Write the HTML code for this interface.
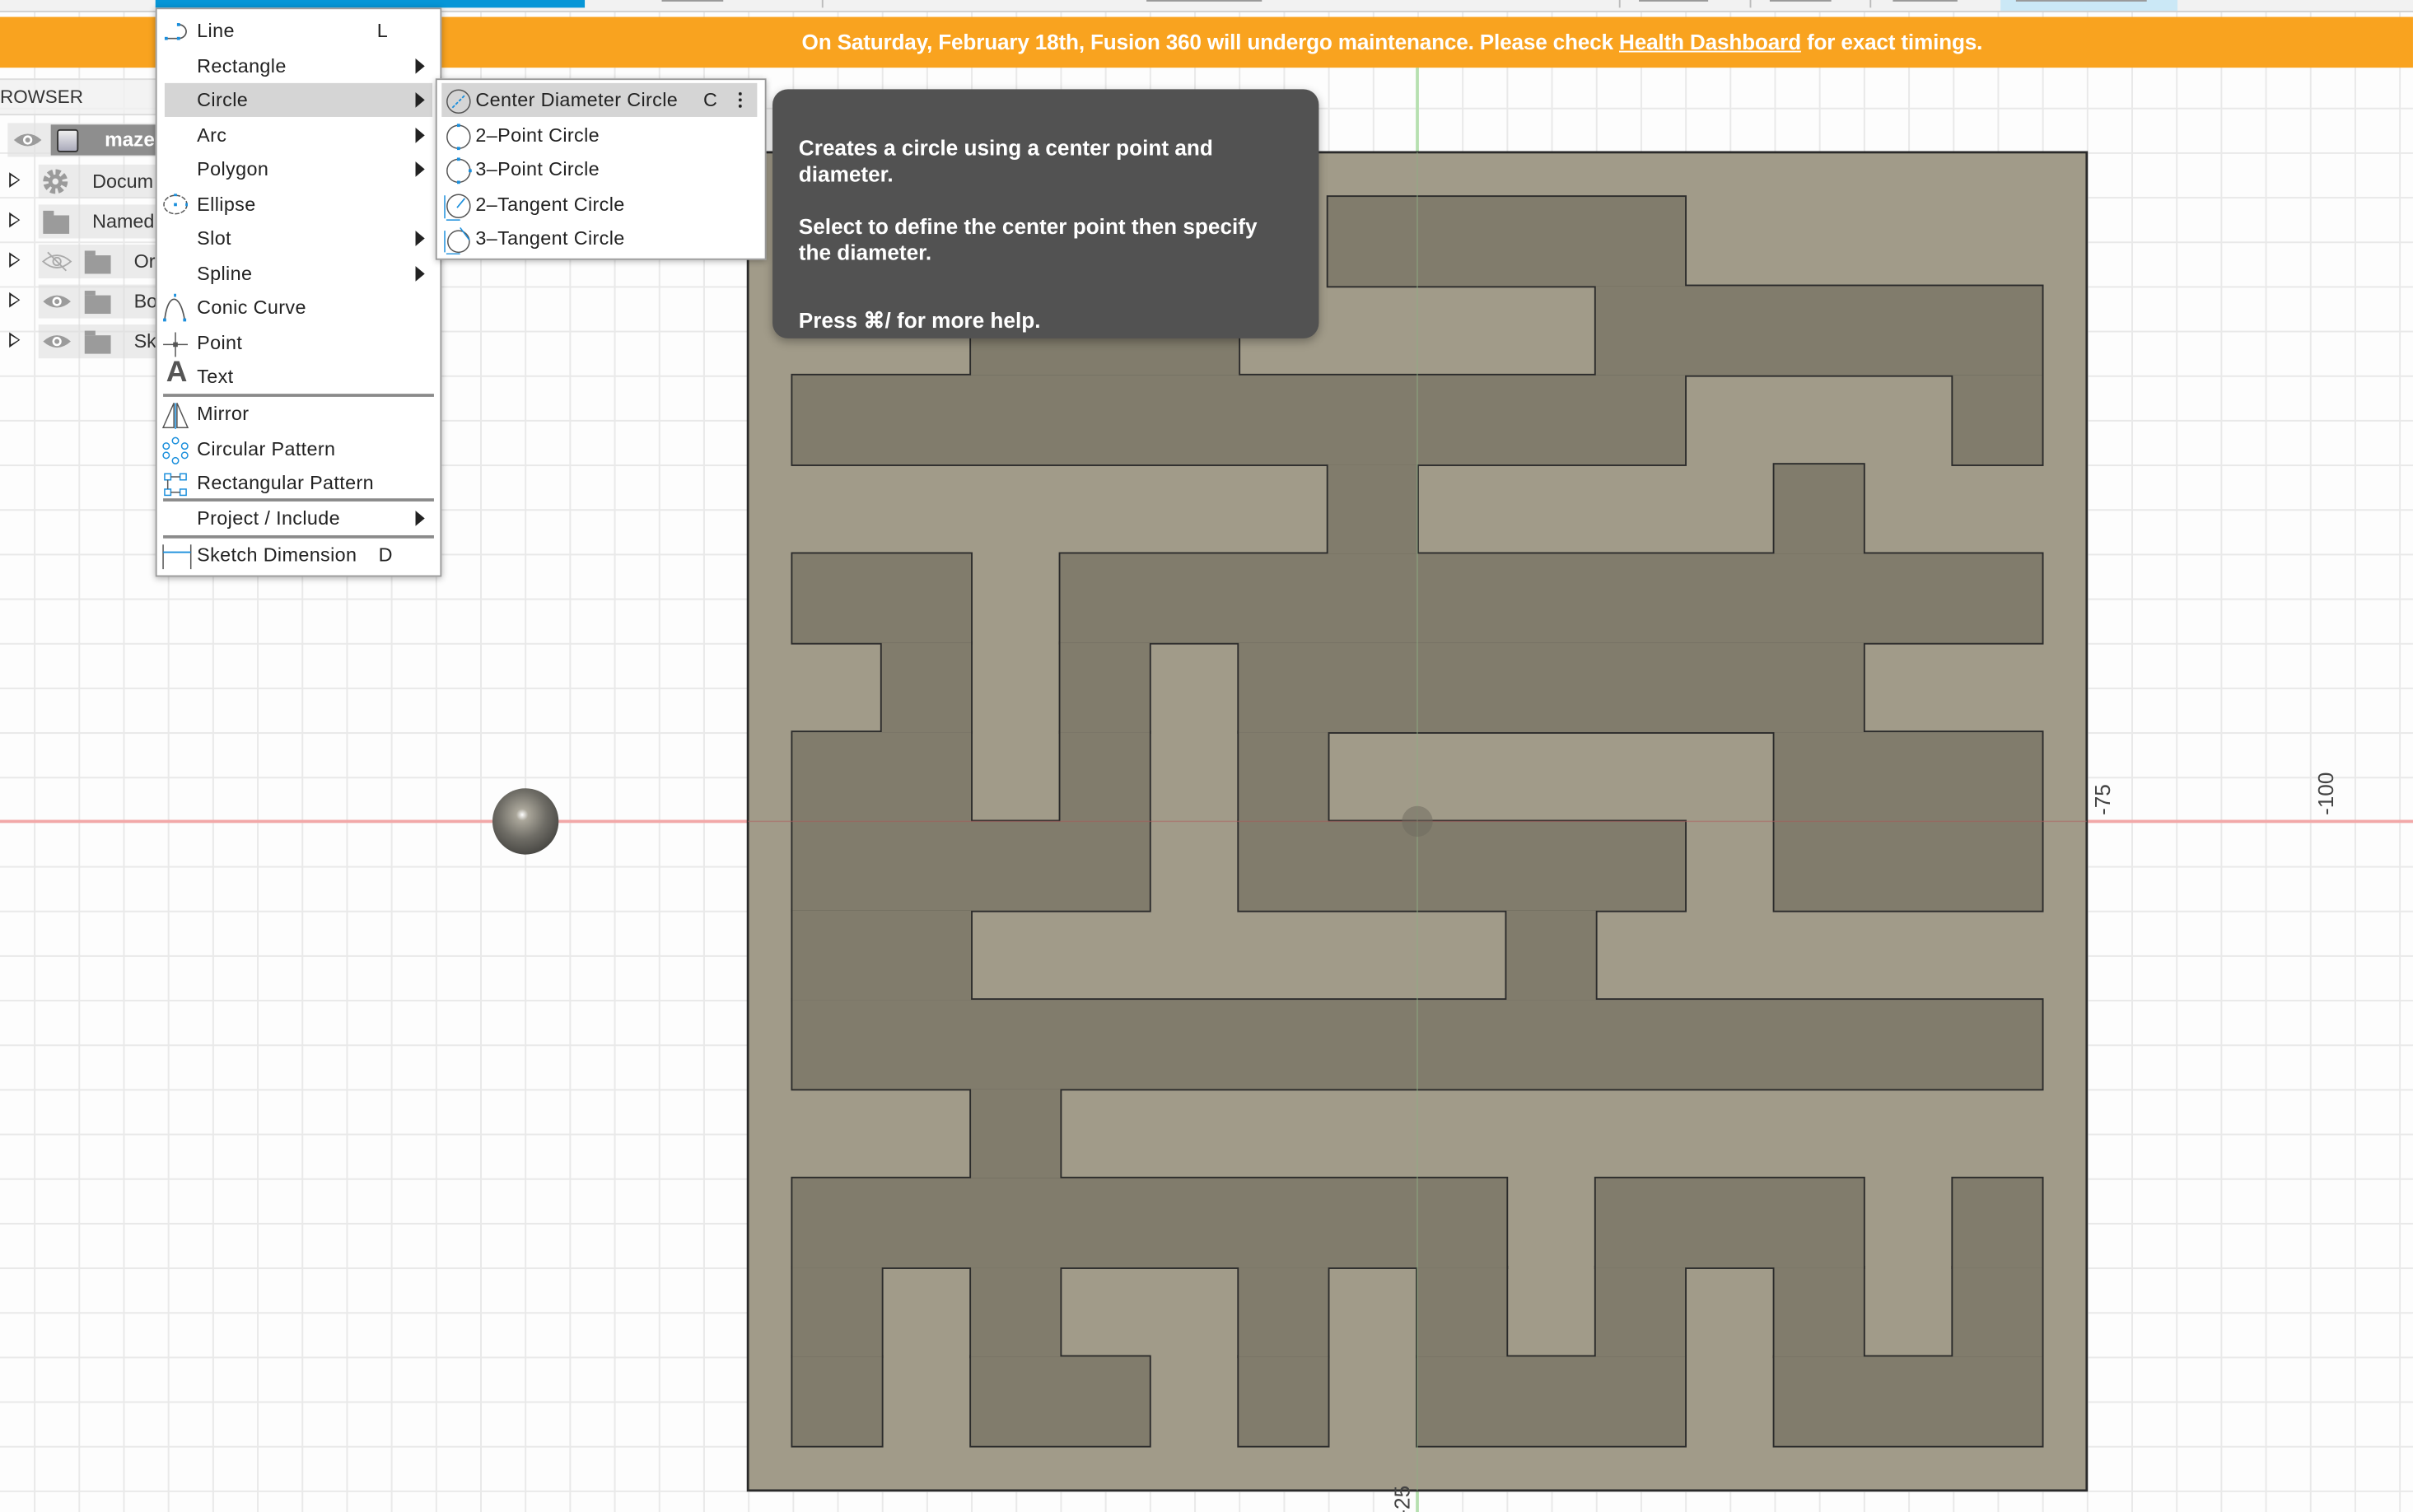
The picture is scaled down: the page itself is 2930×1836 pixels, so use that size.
<!DOCTYPE html>
<html><head><meta charset="utf-8">
<style>
html,body{margin:0;padding:0;width:2930px;height:1836px;overflow:hidden;background:#fff}
#w{position:absolute;left:0;top:0;width:1568px;height:983px;transform:scale(1.8686,1.8678);transform-origin:0 0;overflow:hidden;font-family:"Liberation Sans",sans-serif;
background-color:#fdfdfd;
background-image:linear-gradient(to right,#e9e9e9 1px,transparent 1px),linear-gradient(to bottom,#e9e9e9 1px,transparent 1px);
background-size:29px 29px;background-position:22px 12px}
.abs{position:absolute}
.menu{position:absolute;background:#fff;border:1px solid #9a9a9a;box-shadow:0 1px 4px rgba(0,0,0,.3)}
.mi{position:absolute;left:0;right:0;height:22px;font-size:12.5px;color:#222;line-height:22px;letter-spacing:.2px}
.mi .t{position:absolute;left:21px}
.arr{position:absolute;right:10px;top:6px;width:0;height:0;border-left:6px solid #222;border-top:5px solid transparent;border-bottom:5px solid transparent}
.sc{position:absolute;left:139px}
.ic{position:absolute;left:3px;top:3px}
.sep{position:absolute;left:4px;right:4px;height:2px;background:#8a8a8a}
.br{position:absolute;height:22px;background:rgba(220,220,220,.55);font-size:12.5px;color:#333;line-height:22px}
.tri{position:absolute;left:6px;width:0;height:0;border-left:7px solid #222;border-top:5px solid transparent;border-bottom:5px solid transparent}
.tri:after{content:"";position:absolute;left:-6px;top:-3.5px;border-left:5px solid #fff;border-top:3.5px solid transparent;border-bottom:3.5px solid transparent}
.fold{position:absolute;width:17px;height:12px;background:#9b9b9b}
.fold:before{content:"";position:absolute;left:0;top:-3px;width:7px;height:3px;background:#9b9b9b}
.tt{position:absolute;left:502px;top:58px;width:355px;height:162px;background:#525252;border-radius:10px;color:#fff;font-weight:bold;font-size:14px;line-height:17px;box-shadow:0 2px 6px rgba(0,0,0,.3)}
.tt p{position:absolute;left:17px;margin:0;width:315px}
</style></head><body><div id="w">

<div class="abs" style="left:0;top:533px;width:1568px;height:2px;background:#f2a8a8"></div>
<div class="abs" style="left:920px;top:44px;width:2px;height:940px;background:#b6e0b0"></div>

<svg class="abs" style="left:0;top:0" width="1568" height="983" viewBox="0 0 1568 983">
<defs>
<g id="cells">
<rect x="863" y="128" width="232" height="58"/>
<rect x="631" y="186" width="174" height="58"/><rect x="1037" y="186" width="290" height="58"/>
<rect x="515" y="244" width="580" height="58"/><rect x="1269" y="244" width="58" height="58"/>
<rect x="863" y="302" width="58" height="58"/><rect x="1153" y="302" width="58" height="58"/>
<rect x="515" y="360" width="116" height="58"/><rect x="689" y="360" width="638" height="58"/>
<rect x="573" y="418" width="58" height="58"/><rect x="689" y="418" width="58" height="58"/><rect x="805" y="418" width="406" height="58"/>
<rect x="515" y="476" width="116" height="58"/><rect x="689" y="476" width="58" height="58"/><rect x="805" y="476" width="58" height="58"/><rect x="1153" y="476" width="174" height="58"/>
<rect x="515" y="534" width="232" height="58"/><rect x="805" y="534" width="290" height="58"/><rect x="1153" y="534" width="174" height="58"/>
<rect x="515" y="592" width="116" height="58"/><rect x="979" y="592" width="58" height="58"/>
<rect x="515" y="650" width="812" height="58"/>
<rect x="631" y="708" width="58" height="58"/>
<rect x="515" y="766" width="464" height="58"/><rect x="1037" y="766" width="174" height="58"/><rect x="1269" y="766" width="58" height="58"/>
<rect x="515" y="824" width="58" height="58"/><rect x="631" y="824" width="58" height="58"/><rect x="805" y="824" width="58" height="58"/><rect x="921" y="824" width="58" height="58"/><rect x="1037" y="824" width="58" height="58"/><rect x="1153" y="824" width="58" height="58"/><rect x="1269" y="824" width="58" height="58"/>
<rect x="515" y="882" width="58" height="58"/><rect x="631" y="882" width="116" height="58"/><rect x="805" y="882" width="58" height="58"/><rect x="921" y="882" width="174" height="58"/><rect x="1153" y="882" width="174" height="58"/>
</g>
<radialGradient id="sp" cx="45%" cy="40%" r="60%"><stop offset="0" stop-color="#fff"/><stop offset=".15" stop-color="#aaa69a"/><stop offset=".6" stop-color="#6f6d66"/><stop offset="1" stop-color="#4a4945"/></radialGradient>
</defs>
<rect x="486" y="99" width="870" height="870" fill="#a19b89" stroke="#2a2a2a" stroke-width="1.5"/>
<use href="#cells" fill="#807b6b" stroke="#2b2b2b" stroke-width="2"/>
<use href="#cells" fill="#817c6c" stroke="none"/>
<line x1="921" y1="99" x2="921" y2="969" stroke="#8fae84" stroke-width="0.8" opacity=".6"/>
<line x1="486" y1="534" x2="1356" y2="534" stroke="#b06060" stroke-width="0.8" opacity=".5"/>
<ellipse cx="921" cy="534" rx="10" ry="10" fill="#6d6a5d" opacity=".5"/>
<text font-family="Liberation Sans" font-size="14" fill="#444" transform="translate(1371,530) rotate(-90)">-75</text>
<text font-family="Liberation Sans" font-size="14" fill="#444" transform="translate(1516,530) rotate(-90)">-100</text>
<text font-family="Liberation Sans" font-size="14" fill="#444" transform="translate(916,986) rotate(-90)">-25</text>
<circle cx="341.5" cy="534" r="21.5" fill="url(#sp)"/>
</svg>

<div class="abs" style="left:0;top:0;width:1568px;height:7px;background:#f2f2f2;border-bottom:1px solid #cfcfcf"></div>
<div class="abs" style="left:101px;top:0;width:279px;height:5px;background:#0696d7"></div>
<div class="abs" style="left:1300px;top:0;width:115px;height:7px;background:#cbe8f6"></div>
<div class="abs" style="left:534px;top:0;width:1px;height:5px;background:#bbb"></div>
<div class="abs" style="left:1052px;top:0;width:1px;height:5px;background:#bbb"></div>
<div class="abs" style="left:1137px;top:0;width:1px;height:5px;background:#bbb"></div>
<div class="abs" style="left:1215px;top:0;width:1px;height:5px;background:#bbb"></div>
<div class="abs" style="left:430px;top:0;width:40px;height:1px;background:#999"></div>
<div class="abs" style="left:745px;top:0;width:75px;height:1px;background:#999"></div>
<div class="abs" style="left:1065px;top:0;width:45px;height:1px;background:#999"></div>
<div class="abs" style="left:1150px;top:0;width:40px;height:1px;background:#999"></div>
<div class="abs" style="left:1230px;top:0;width:42px;height:1px;background:#999"></div>
<div class="abs" style="left:1310px;top:0;width:85px;height:1px;background:#999"></div>

<div class="abs" style="left:0;top:11px;width:1568px;height:33px;background:#f9a31f;color:#fff;font-weight:bold;font-size:14px;line-height:33px">
<span class="abs" style="left:521px;top:0;white-space:nowrap;letter-spacing:-0.1px">On Saturday, February 18th, Fusion 360 will undergo maintenance. Please check <u>Health Dashboard</u> for exact timings.</span></div>

<div class="abs" style="left:0;top:51px;width:101px;height:22px;background:rgba(240,240,240,.8);border-bottom:1px solid #ddd;border-top:1px solid #ddd;font-size:12px;color:#333;line-height:22px">ROWSER</div>
<div class="br" style="left:5px;top:80px;width:96px;background:rgba(225,225,225,.7)"></div>
<svg class="abs" style="left:8px;top:85px" width="20" height="12"><path d="M1 6 Q10 -2 19 6 Q10 14 1 6Z" fill="#9b9b9b"/><circle cx="10" cy="6" r="3" fill="#fff"/><circle cx="10" cy="6" r="1.6" fill="#9b9b9b"/></svg>
<div class="abs" style="left:33px;top:81px;width:68px;height:20px;background:#8e8e8e"></div>
<div class="abs" style="left:37px;top:84px;width:12px;height:13px;background:linear-gradient(#eee,#aab);border:1px solid #333;border-radius:2px"></div>
<div class="abs" style="left:68px;top:81px;color:#fff;font-weight:bold;font-size:13px;line-height:20px">maze</div>
<div class="tri" style="top:112px"></div><div class="br" style="left:25px;top:107px;width:76px"><svg class="abs" style="left:2px;top:2px" width="18" height="18"><circle cx="9" cy="9" r="6" fill="none" stroke="#9b9b9b" stroke-width="4" stroke-dasharray="3 1.7"/><circle cx="9" cy="9" r="4.5" fill="#9b9b9b"/><circle cx="9" cy="9" r="2" fill="#eee"/></svg><span class="abs" style="left:35px">Docum</span></div>
<div class="tri" style="top:138px"></div><div class="br" style="left:25px;top:133px;width:76px"><div class="fold" style="left:3px;top:7px"></div><span class="abs" style="left:35px">Named</span></div>
<div class="tri" style="top:164px"></div><div class="br" style="left:25px;top:159px;width:76px"><svg class="abs" style="left:2px;top:4px" width="20" height="14"><path d="M1 7 Q10 -1 19 7 Q10 15 1 7Z" fill="none" stroke="#aaa"/><circle cx="10" cy="7" r="2.5" fill="none" stroke="#aaa"/><line x1="4" y1="1" x2="16" y2="13" stroke="#aaa"/></svg><div class="fold" style="left:30px;top:7px"></div><span class="abs" style="left:62px">Or</span></div>
<div class="tri" style="top:190px"></div><div class="br" style="left:25px;top:185px;width:76px"><svg class="abs" style="left:2px;top:5px" width="20" height="12"><path d="M1 6 Q10 -2 19 6 Q10 14 1 6Z" fill="#9b9b9b"/><circle cx="10" cy="6" r="3" fill="#fff"/><circle cx="10" cy="6" r="1.6" fill="#9b9b9b"/></svg><div class="fold" style="left:30px;top:7px"></div><span class="abs" style="left:62px">Bo</span></div>
<div class="tri" style="top:216px"></div><div class="br" style="left:25px;top:211px;width:76px"><svg class="abs" style="left:2px;top:5px" width="20" height="12"><path d="M1 6 Q10 -2 19 6 Q10 14 1 6Z" fill="#9b9b9b"/><circle cx="10" cy="6" r="3" fill="#fff"/><circle cx="10" cy="6" r="1.6" fill="#9b9b9b"/></svg><div class="fold" style="left:30px;top:7px"></div><span class="abs" style="left:62px">Sk</span></div>

<div class="menu" style="left:101px;top:5px;width:184px;height:368px">
<div class="mi" style="top:3px"><svg class="ic" width="18" height="16"><path d="M3 13 H11 M11 4 A5 4.5 0 0 1 11 13" fill="none" stroke="#555" stroke-width=".9"/><rect x="2" y="12" width="2" height="2" fill="#1b8fdc"/><rect x="10" y="12" width="2" height="2" fill="#1b8fdc"/><rect x="10" y="3" width="2" height="2" fill="#1b8fdc"/></svg><span class="t" style="left:26px">Line</span><span class="sc" style="left:143px">L</span></div>
<div class="mi" style="top:25.5px"><span class="t" style="left:26px">Rectangle</span><div class="arr"></div></div>
<div class="mi" style="top:48px;left:5px;right:5px;background:#d5d5d5"><span class="t">Circle</span><div class="arr" style="right:5px"></div></div>
<div class="mi" style="top:70.5px"><span class="t" style="left:26px">Arc</span><div class="arr"></div></div>
<div class="mi" style="top:93px"><span class="t" style="left:26px">Polygon</span><div class="arr"></div></div>
<div class="mi" style="top:115.5px"><svg class="ic" width="18" height="16"><ellipse cx="9" cy="8" rx="7.5" ry="6" fill="none" stroke="#555" stroke-width=".8" stroke-dasharray="3 1"/><rect x="8" y="7" width="2" height="2" fill="#1b8fdc"/><rect x="15.5" y="7" width="1.5" height="2" fill="#1b8fdc"/><rect x="8" y="1" width="2" height="1.5" fill="#1b8fdc"/></svg><span class="t" style="left:26px">Ellipse</span></div>
<div class="mi" style="top:138px"><span class="t" style="left:26px">Slot</span><div class="arr"></div></div>
<div class="mi" style="top:160.5px"><span class="t" style="left:26px">Spline</span><div class="arr"></div></div>
<div class="mi" style="top:183px"><svg class="ic" style="top:1px" width="18" height="20"><path d="M2 18 C4 0 12 0 15 18" fill="none" stroke="#555" stroke-width=".9"/><rect x="1" y="17" width="2" height="2" fill="#1b8fdc"/><rect x="14" y="17" width="2" height="2" fill="#1b8fdc"/><rect x="8" y="1" width="1.5" height="2" fill="#1b8fdc"/></svg><span class="t" style="left:26px">Conic Curve</span></div>
<div class="mi" style="top:205.5px"><svg class="ic" width="18" height="18"><path d="M1 9 H17 M9 1 V17" stroke="#555" stroke-width=".8"/><rect x="7.5" y="7.5" width="3" height="3" fill="#555"/></svg><span class="t" style="left:26px">Point</span></div>
<div class="mi" style="top:228px"><span class="abs" style="left:6px;top:-2px;font-size:19px;font-weight:bold;color:#555">A</span><span class="t" style="left:26px">Text</span></div>
<div class="sep" style="top:250px"></div>
<div class="mi" style="top:252px"><svg class="ic" width="18" height="18"><path d="M8 1 L1 17 H8Z M10 1 L17 17 H10Z" fill="none" stroke="#555" stroke-width=".8"/><line x1="9" y1="1" x2="9" y2="18" stroke="#1b8fdc" stroke-width=".8"/></svg><span class="t" style="left:26px">Mirror</span></div>
<div class="mi" style="top:274.5px"><svg class="ic" width="18" height="18"><g fill="none" stroke="#1b8fdc" stroke-width=".8"><circle cx="9" cy="2.5" r="2"/><circle cx="3" cy="6" r="2"/><circle cx="15" cy="6" r="2"/><circle cx="3" cy="12" r="2"/><circle cx="15" cy="12" r="2"/><circle cx="9" cy="15.5" r="2"/></g></svg><span class="t" style="left:26px">Circular Pattern</span></div>
<div class="mi" style="top:297px"><svg class="ic" width="18" height="18"><g fill="none" stroke="#1b8fdc" stroke-width=".8"><rect x="2" y="2" width="4" height="4"/><rect x="12" y="2" width="4" height="4"/><rect x="2" y="12" width="4" height="4"/><rect x="12" y="12" width="4" height="4"/></g><path d="M6 4H12 M6 14H12 M4 6V12" stroke="#555" stroke-width=".8"/></svg><span class="t" style="left:26px">Rectangular Pattern</span></div>
<div class="sep" style="top:318px"></div>
<div class="mi" style="top:320px"><span class="t" style="left:26px">Project / Include</span><div class="arr"></div></div>
<div class="sep" style="top:342px"></div>
<div class="mi" style="top:344px"><svg class="ic" width="20" height="18"><path d="M1 1V17 M19 1V17" stroke="#555" stroke-width=".8"/><path d="M1 6H19" stroke="#1b8fdc" stroke-width="1"/></svg><span class="t" style="left:26px">Sketch Dimension</span><span class="sc" style="left:144px">D</span></div>
</div>

<div class="menu" style="left:283px;top:51px;width:213px;height:116px">
<div class="mi" style="top:2px;left:3px;right:5px;background:#d5d5d5"><svg class="ic" style="left:2px" width="18" height="18"><circle cx="9" cy="9" r="7.5" fill="none" stroke="#555" stroke-width=".8"/><path d="M5 13 L13 5" stroke="#1b8fdc" stroke-width="1" stroke-dasharray="2 1"/></svg><span class="t" style="left:22px">Center Diameter Circle</span><span class="sc" style="left:170px">C</span><span class="abs" style="left:193px;top:5px;width:2px;height:12px;background:radial-gradient(circle,#222 45%,transparent 50%) 0 0/2px 4px"></span></div>
<div class="mi" style="top:24.5px"><svg class="ic" style="left:5px" width="18" height="18"><circle cx="9" cy="9" r="7.5" fill="none" stroke="#555" stroke-width=".8"/><rect x="8" y="0.5" width="2" height="2" fill="#1b8fdc"/><rect x="8" y="15.5" width="2" height="2" fill="#1b8fdc"/></svg><span class="t" style="left:25px">2–Point Circle</span></div>
<div class="mi" style="top:47px"><svg class="ic" style="left:5px" width="18" height="18"><circle cx="9" cy="9" r="7.5" fill="none" stroke="#555" stroke-width=".8"/><rect x="8" y="0.5" width="2" height="2" fill="#1b8fdc"/><rect x="8" y="15.5" width="2" height="2" fill="#1b8fdc"/><rect x="15.5" y="8" width="2" height="2" fill="#1b8fdc"/></svg><span class="t" style="left:25px">3–Point Circle</span></div>
<div class="mi" style="top:69.5px"><svg class="ic" style="left:4px" width="18" height="20"><circle cx="10" cy="9" r="7.5" fill="none" stroke="#555" stroke-width=".8"/><path d="M1 2V17 M2 18H11" stroke="#1b8fdc" stroke-width=".8"/><path d="M9 10L14 4" stroke="#1b8fdc" stroke-width=".9"/></svg><span class="t" style="left:25px">2–Tangent Circle</span></div>
<div class="mi" style="top:92px"><svg class="ic" style="left:4px" width="18" height="20"><circle cx="10" cy="10" r="7" fill="none" stroke="#555" stroke-width=".8"/><path d="M1 3V17 M2 18H11 M11 1L17 9" stroke="#1b8fdc" stroke-width=".8"/></svg><span class="t" style="left:25px">3–Tangent Circle</span></div>
</div>

<div class="tt">
<p style="top:30px">Creates a circle using a center point and diameter.</p>
<p style="top:81px">Select to define the center point then specify the diameter.</p>
<p style="top:142px">Press ⌘/ for more help.</p>
</div>

</div></body></html>
